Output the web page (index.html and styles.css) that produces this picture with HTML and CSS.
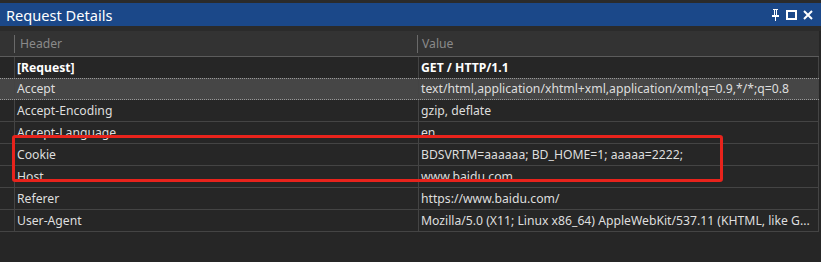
FILE: index.html
```html
<!DOCTYPE html>
<html lang="en">
<head>
    <meta charset="UTF-8">
    <meta name="viewport" content="width=device-width, initial-scale=1.0">
    <title>Request Details</title>
    <link rel="stylesheet" href="styles.css">
</head>
<body>
    <div id="panel">
        <div id="titlebar">
            <span class="title">Request Details</span>
            <div class="tools">
                <svg width="9" height="12" viewBox="0 0 9 12"><path d="M2 0h5v1H6v5h2v2H5v4H4V8H1V6h2V1H2z M4 1v5h1V1z" fill="#fff" fill-rule="evenodd"/></svg>
                <svg width="11" height="10" viewBox="0 0 11 10"><rect x="1" y="1" width="9" height="8" fill="none" stroke="#fff" stroke-width="2"/></svg>
                <svg width="10" height="10" viewBox="0 0 10 10"><path d="M1 1L9 9M9 1L1 9" stroke="#fff" stroke-width="2"/></svg>
            </div>
        </div>
        <div id="grid">
            <div class="row head">
                <div class="gutter"></div>
                <div class="cell key"><span class="label">Header</span></div>
                <div class="cell val"><span class="label">Value</span></div>
            </div>
            <div class="row bold">
                <div class="gutter"></div>
                <div class="cell key">[Request]</div>
                <div class="cell val">GET / HTTP/1.1</div>
            </div>
            <div class="row selected">
                <div class="gutter"></div>
                <div class="cell key">Accept</div>
                <div class="cell val">text/html,application/xhtml+xml,application/xml;q=0.9,*/*;q=0.8</div>
            </div>
            <div class="row">
                <div class="gutter"></div>
                <div class="cell key">Accept-Encoding</div>
                <div class="cell val">gzip, deflate</div>
            </div>
            <div class="row">
                <div class="gutter"></div>
                <div class="cell key">Accept-Language</div>
                <div class="cell val">en</div>
            </div>
            <div class="row">
                <div class="gutter"></div>
                <div class="cell key">Cookie</div>
                <div class="cell val">BDSVRTM=aaaaaa; BD_HOME=1; aaaaa=2222;</div>
            </div>
            <div class="row">
                <div class="gutter"></div>
                <div class="cell key">Host</div>
                <div class="cell val">www.baidu.com</div>
            </div>
            <div class="row">
                <div class="gutter"></div>
                <div class="cell key">Referer</div>
                <div class="cell val">https://www.baidu.com/</div>
            </div>
            <div class="row">
                <div class="gutter"></div>
                <div class="cell key">User-Agent</div>
                <div class="cell val">Mozilla/5.0 (X11; Linux x86_64) AppleWebKit/537.11 (KHTML, like G...</div>
            </div>
            <div class="highlight"></div>
        </div>
    </div>
</body>
</html>
```

FILE: styles.css
```css
body{
    margin: 0;
    background-color: #262626;
    font-family: "Noto Sans", "Liberation Sans", sans-serif;
    font-size: 12.2px;
    color: #dedede;
}
#panel{
    width: 821px;
    height: 262px;
    padding-top: 3px;
    background-color: #2b2b2b;
    box-sizing: border-box;
}
#titlebar{
    height: 23px;
    background-color: #1b4889;
    display: flex;
    align-items: center;
    justify-content: space-between;
    padding: 0 8px 0 6px;
    margin-bottom: 5px;
}
.title{
    color: #fff;
    font-size: 14.6px;
}
.tools{
    display: flex;
    align-items: center;
    gap: 6px;
}
#grid{
    position: relative;
    background-color: #262626;
    height: 231px;
}
.row{
    display: flex;
    height: 21px;
    border-bottom: 1px solid #444;
    width: 819px;
}
.gutter{
    width: 14px;
    border-right: 1px solid #444;
}
.cell{
    line-height: 21px;
    padding-left: 2px;
    padding-right: 1px;
    white-space: nowrap;
    overflow: hidden;
    border-right: 1px solid #444;
    box-sizing: border-box;
}
.key{
    width: 404px;
}
.val{
    width: 400px;
}
.head{
    height: 25px;
    background-color: #333;
    border-bottom: 1px solid #5c5c5c;
}
.head .gutter, .head .cell{
    border-right: 0;
}
.head .cell{
    display: flex;
    align-items: center;
    padding-left: 0;
    width: 403px;
    color: #8a8a8a;
}
.head .val{
    width: 401px;
}
.label{
    border-left: 1px solid #6a6a6a;
    line-height: 18px;
    padding-left: 5px;
}
.head .val .label{
    padding-left: 4px;
}
.bold{
    font-weight: bold;
    color: #fff;
}
.selected{
    background-color: #464646;
    border-top: 1px dotted #999;
    border-bottom: 1px dotted #999;
    height: 20px;
    margin-top: -1px;
}
.selected .cell{
    line-height: 20px;
}
.highlight{
    position: absolute;
    left: 12px;
    top: 104px;
    width: 705px;
    height: 41px;
    border: 3px solid #e8231c;
    border-radius: 3px;
}
```
